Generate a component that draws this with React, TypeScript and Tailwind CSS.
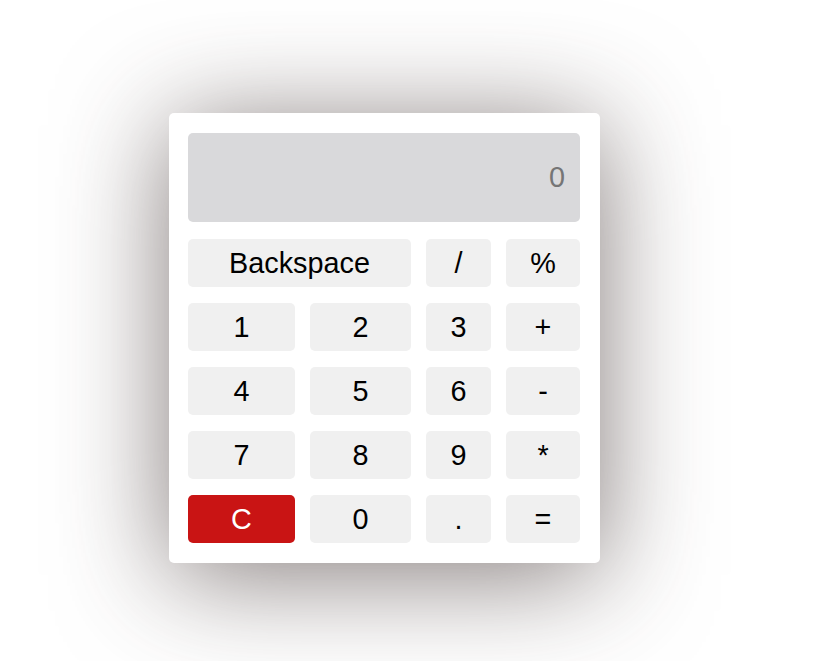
import { useState } from 'react'

type Key = { label: string; span?: boolean; danger?: boolean }

const keys: Key[] = [
  { label: 'Backspace', span: true },
  { label: '/' },
  { label: '%' },
  { label: '1' },
  { label: '2' },
  { label: '3' },
  { label: '+' },
  { label: '4' },
  { label: '5' },
  { label: '6' },
  { label: '-' },
  { label: '7' },
  { label: '8' },
  { label: '9' },
  { label: '*' },
  { label: 'C', danger: true },
  { label: '0' },
  { label: '.' },
  { label: '=' },
]

export default function App() {
  const [value, setValue] = useState('')

  function press(label: string) {
    if (label === 'C') return setValue('')
    if (label === 'Backspace') return setValue((v) => v.slice(0, -1))
    if (label === '=') {
      try {
        // eslint-disable-next-line no-new-func
        const result = Function(`return (${value || 0})`)()
        setValue(String(result))
      } catch {
        setValue('')
      }
      return
    }
    setValue((v) => v + label)
  }

  return (
    <div className="min-h-[661px] w-full bg-white pl-[169px] pt-[113px] font-['Liberation_Sans',Arial,sans-serif]">
      <div className="w-[431px] rounded-[5px] bg-white pl-[19px] pr-[20px] pt-[20px] pb-[20px] shadow-[0_12px_110px_rgba(55,40,38,0.62)]">
        {/* Display */}
        <div className="flex h-[89px] items-center justify-end rounded-[5px] bg-[#d9d9db] px-[15px] text-[28.8px] text-[#757575]">
          {value || '0'}
        </div>

        {/* Keypad */}
        <div className="mt-[17px] grid grid-cols-[107px_101px_65px_74px] gap-x-[15px] gap-y-[16px]">
          {keys.map((k) => (
            <button
              key={k.label}
              onClick={() => press(k.label)}
              className={
                'flex h-[48px] items-center justify-center rounded-[5px] text-[28.8px] leading-none ' +
                (k.span ? 'col-span-2 ' : '') +
                (k.danger ? 'bg-[#c91414] text-white' : 'bg-[#f0f0f0] text-black')
              }>
              {k.label}
            </button>
          ))}
        </div>
      </div>
    </div>
  )
}
